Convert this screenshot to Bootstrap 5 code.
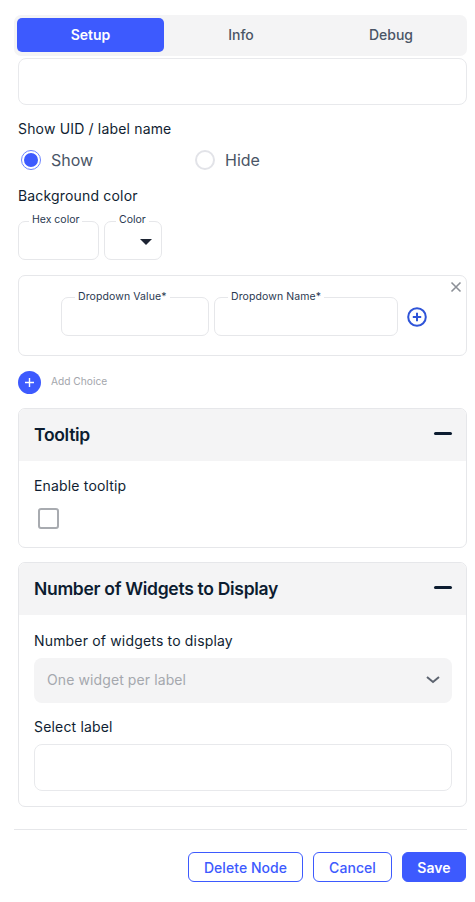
<!DOCTYPE html>
<html lang="en">
<head>
<meta charset="utf-8">
<title>Node settings</title>
<link href="https://cdn.jsdelivr.net/npm/bootstrap@5.3.0/dist/css/bootstrap.min.css" rel="stylesheet">
<style>
body{font-family:Inter,"Liberation Sans",sans-serif;color:#101e32;background:#fff;overflow:hidden}
.shell{width:475px;height:902px;padding:15px 8px 0 14px}
.tabbar{background:#f4f4f5;border-radius:7px;height:41px;padding:3px 0 4px 3px}
.tabbar .nav-link{height:34px;width:147px;padding:0;border-radius:5px;font-size:14px;font-weight:600;color:#4a5566;line-height:34px;text-align:center}
.tabbar .nav-item:nth-child(2) .nav-link{width:154px;font-weight:500}
.tabbar .nav-item:nth-child(3) .nav-link{width:146px;font-weight:500}
.tabbar .nav-link.active{background:#3d5afe;color:#fff}
.inner{margin-left:4px}
.blank{display:block;width:100%;height:47px;border:1px solid #e8e9ec;border-radius:8px;background:#fff;box-shadow:none}
.flabel{font-size:14px;font-weight:400;letter-spacing:.17px;line-height:20px;color:#101e32;margin:0}
.radios{height:24px;margin-top:9px;padding-left:3px;font-size:16px;color:#4a5566}
.radio-item{display:flex;align-items:center;width:174px;gap:10px;margin:0}
.radios .form-check-input{width:20px;height:20px;margin:0;border:2px solid #e2e3e8;background-color:#fff;background-image:none;flex:none}
.radios .form-check-input:checked{background:#3d5afe;border:3px solid #fff;outline:1.5px solid #6c83ff;outline-offset:-1.5px;box-shadow:none}
.fset{position:relative;border:1px solid #e6e7ea;border-radius:7px;height:39px;background:#fff}
.fset span{position:absolute;top:-9px;background:#fff;padding:0 3px;font-size:10.5px;line-height:14px;color:#2a3850;white-space:nowrap}
.choice .fset span{top:-8px;letter-spacing:.1px}
.caret{position:absolute;right:9px;top:17px;width:0;height:0;border-left:6px solid transparent;border-right:6px solid transparent;border-top:6px solid #1d2433}
.choice{position:relative;height:81px;border:1px solid #e6e7ea;border-radius:7px;margin-top:15px;padding:21px 0 0 42px}
.xicon{position:absolute;right:3px;top:4px}
.plusring{margin-left:9px}
.addrow{height:24px;margin-top:14px;gap:10px}
.addbtn{width:23px;height:23px;border-radius:50%;background:#3d5afe;display:flex;align-items:center;justify-content:center;flex:none}
.addtext{font-size:10.2px;color:#a3a6ac}
.panel{border:1px solid #e6e7ea;border-radius:7px;overflow:hidden;background:#fff}
.panelhead{height:52px;background:#f4f4f5;padding:1px 14px 0 15px;font-size:17.5px;font-weight:600;color:#0c1c30;letter-spacing:-.3px}
.minus{width:18px;height:3px;border-radius:2px;background:#0c1c30;margin-top:-5px}
.panelbody{padding:15px 14px 0 15px}
.tick{display:block;appearance:none;width:21px;height:21px;margin:12px 0 0 4px;border:2px solid #a8abb0;border-radius:3px;background:#fff}
.pick{height:45px;background:#f4f4f5;border-radius:8px;padding:0 12px 2px 13px;margin-top:7px;font-size:14px;letter-spacing:.1px;color:#a5a8ae}
.foot{border-top:1px solid #e6e7ea;margin-top:22px;padding-top:22px;gap:10px;padding-right:1px}
.foot .btn{height:30px;padding:1px 0 0;font-size:14px;font-weight:500;letter-spacing:.05px;border-radius:6px;line-height:28px;border:1px solid #3d5afe}
.ghost{color:#3d5afe;background:#fff}
.solid{color:#fff;background:#3d5afe;font-weight:600!important}
.tabfit{margin-top:2px}
.lab1{margin-top:14px}
.colorrow{margin-top:15px;gap:5px}
.gap14{margin-top:14px}
.inp7{margin-top:7px}
.w81{width:81px}.w58{width:58px}.w148{width:148px}.w184{width:184px;margin-left:5px}
.w115{width:115px}.w79{width:79px}.w64{width:64px}
.l10{left:10px}.l11{left:11px}.l13{left:13px}
.h140{height:140px}.h245{height:245px}
.pt16{padding-top:16px}
</style>
</head>
<body>
<div class="shell">
  <ul class="nav tabbar flex-nowrap">
    <li class="nav-item"><a class="nav-link active" href="#">Setup</a></li>
    <li class="nav-item"><a class="nav-link" href="#">Info</a></li>
    <li class="nav-item"><a class="nav-link" href="#">Debug</a></li>
  </ul>
  <div class="inner">
    <input class="blank tabfit" type="text" aria-label="Value">
    <p class="flabel lab1">Show UID / label name</p>
    <div class="radios d-flex">
      <label class="radio-item"><input class="form-check-input" type="radio" name="uid" checked>Show</label>
      <label class="radio-item"><input class="form-check-input" type="radio" name="uid">Hide</label>
    </div>
    <p class="flabel gap14">Background color</p>
    <div class="d-flex colorrow">
      <div class="fset w81"><span class="l10">Hex color</span></div>
      <div class="fset w58"><span class="l11">Color</span><i class="caret"></i></div>
    </div>
    <div class="choice">
      <svg class="xicon" width="14" height="14" viewBox="0 0 14 14" fill="none" stroke="#8c9097" stroke-width="1.6"><path d="M2.5 2.5l9 9M11.5 2.5l-9 9"/></svg>
      <div class="d-flex align-items-center">
        <div class="fset w148"><span class="l13">Dropdown Value*</span></div>
        <div class="fset w184"><span class="l13">Dropdown Name*</span></div>
        <svg class="plusring" width="20" height="20" viewBox="0 0 20 20" fill="none" stroke="#2f54d8" stroke-width="2"><circle cx="10" cy="10" r="8.8"/><path d="M10 5.8v8.4M5.8 10h8.4"/></svg>
      </div>
    </div>
    <div class="addrow d-flex align-items-center">
      <div class="addbtn"><svg width="11" height="11" viewBox="0 0 11 11" stroke="#fff" stroke-width="1.4"><path d="M5.5 1v9M1 5.5h9"/></svg></div>
      <span class="addtext">Add Choice</span>
    </div>
    <div class="panel gap14 h140">
      <div class="panelhead d-flex justify-content-between align-items-center">Tooltip<i class="minus"></i></div>
      <div class="panelbody">
        <p class="flabel">Enable tooltip</p>
        <input class="tick" type="checkbox" aria-label="Enable tooltip">
      </div>
    </div>
    <div class="panel gap14 h245">
      <div class="panelhead d-flex justify-content-between align-items-center">Number of Widgets to Display<i class="minus"></i></div>
      <div class="panelbody pt16">
        <p class="flabel">Number of widgets to display</p>
        <div class="pick d-flex justify-content-between align-items-center">One widget per label
          <svg width="14" height="8" viewBox="0 0 14 8" fill="none" stroke="#5d6470" stroke-width="2"><path d="M1 1l6 5 6-5"/></svg>
        </div>
        <p class="flabel gap14">Select label</p>
        <input class="blank inp7" type="text" aria-label="Select label">
      </div>
    </div>
  </div>
  <div class="foot d-flex justify-content-end">
    <button class="btn ghost w115">Delete Node</button>
    <button class="btn ghost w79">Cancel</button>
    <button class="btn solid w64">Save</button>
  </div>
</div>
<script src="https://cdn.jsdelivr.net/npm/bootstrap@5.3.0/dist/js/bootstrap.bundle.min.js"></script>
</body>
</html>
